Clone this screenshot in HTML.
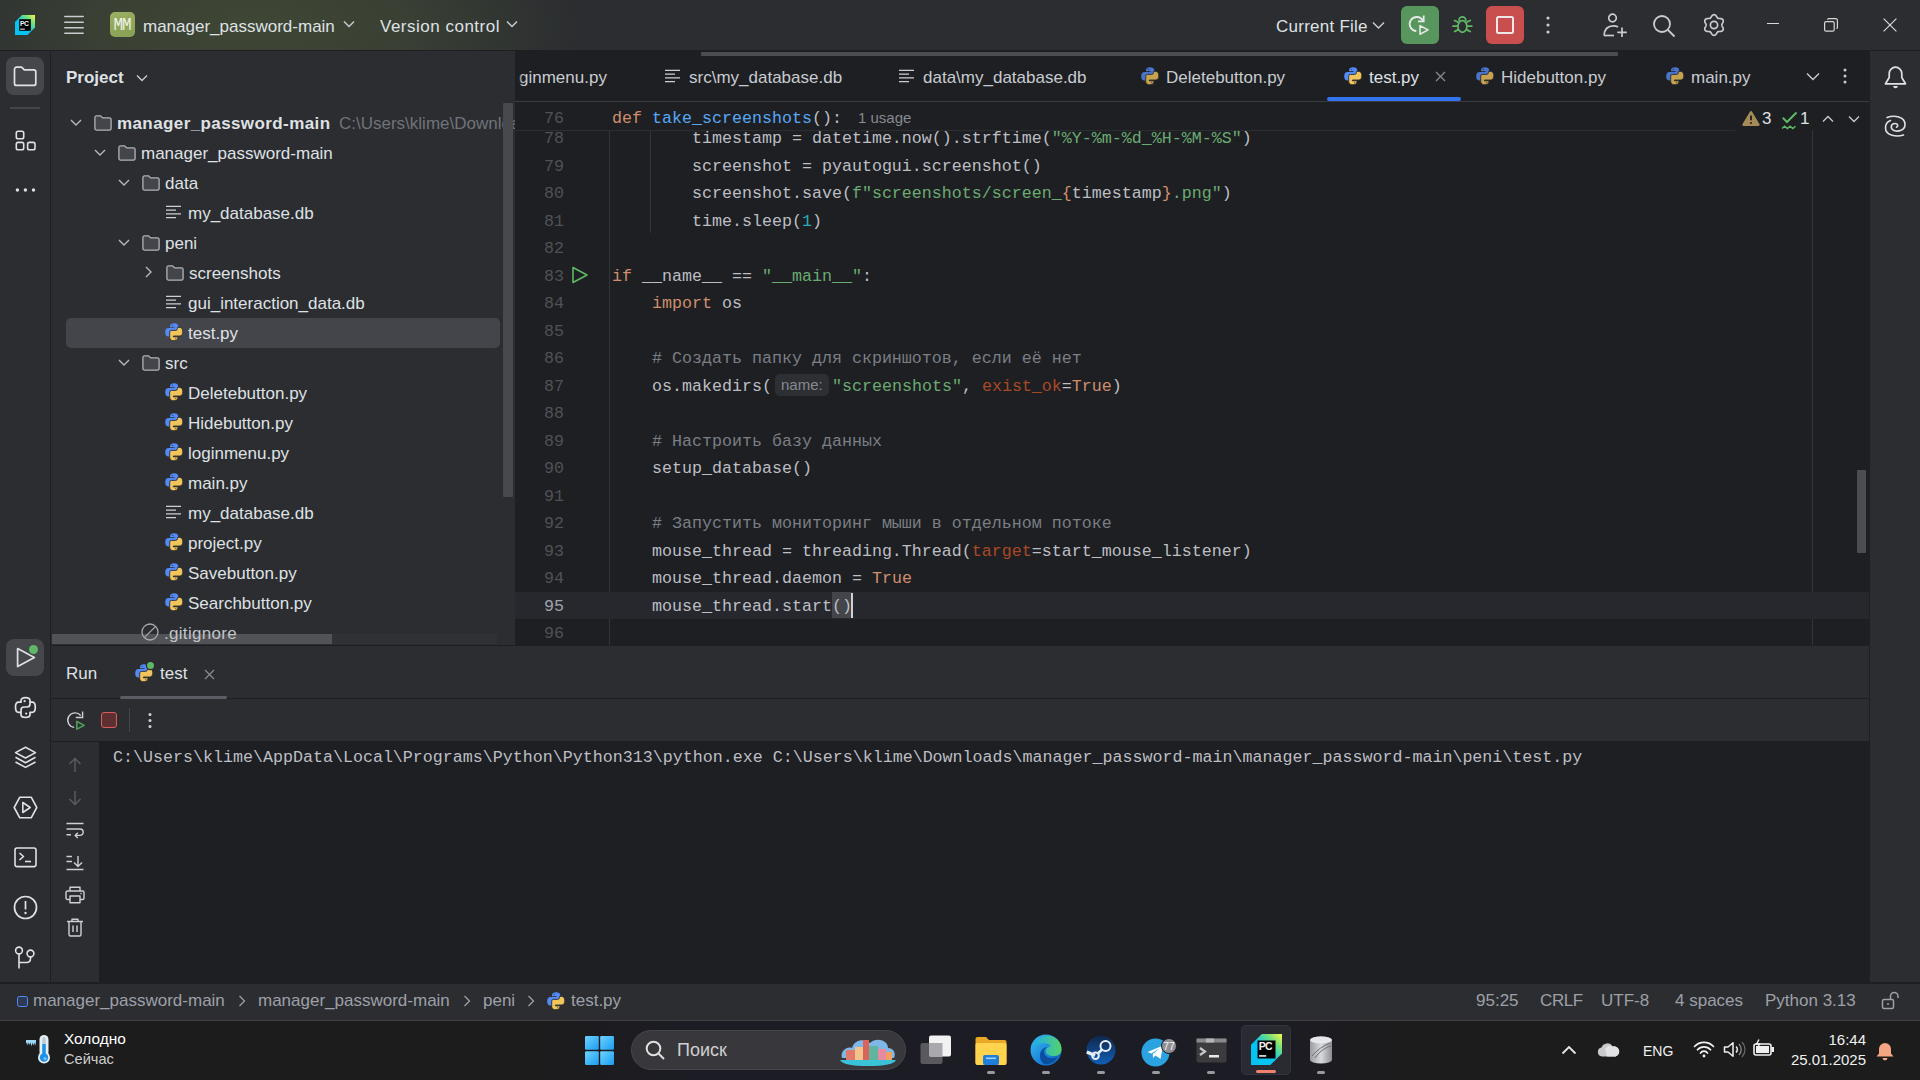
<!DOCTYPE html>
<html><head><meta charset="utf-8">
<style>
*{margin:0;padding:0;box-sizing:border-box}
html,body{width:1920px;height:1080px;overflow:hidden;background:#2b2d30;font-family:"Liberation Sans",sans-serif;color:#dfe1e5}
.a{position:absolute}
.t{position:absolute;white-space:pre;font-size:17px;line-height:20px}
.m{font-family:"Liberation Mono",monospace;font-size:16.667px;white-space:pre;position:absolute;line-height:20px}
svg{position:absolute;overflow:visible}
#title{left:0;top:0;width:1920px;height:50px;background:radial-gradient(ellipse 330px 120px at 250px 25px,#3e4634 0%,#3a4134 45%,#2b2d30 100%)}
.bd{background:#1e1f22}
</style></head><body>
<svg width="0" height="0" style="left:0;top:0"><defs>
<g id="py"><path d="M5 3.2 Q5 0.2 9 0.2 Q13.3 0.2 13.3 3.6 V8.9 Q13.3 10.6 11.5 10.6 H7.6 Q5.5 10.6 5.5 12.6 V13.6 H3.6 Q0.2 13.6 0.2 9.3 Q0.2 5 3.6 5 H9.6 V4.2 H5 Z" fill="#548af7"/>
<path d="M13 14.8 Q13 17.8 9 17.8 Q4.7 17.8 4.7 14.4 V9.1 Q4.7 7.4 6.5 7.4 H10.4 Q12.5 7.4 12.5 5.4 V4.4 H14.4 Q17.8 4.4 17.8 8.7 Q17.8 13 14.4 13 H8.4 V13.8 H13 Z" fill="#f2c55c" stroke="#2b2d30" stroke-width="0.9"/>
<circle cx="7.3" cy="2.3" r="0.6" fill="#2b3a60"/><circle cx="10.7" cy="15.7" r="0.6" fill="#6a5520"/></g>
</defs></svg>
<!-- title bar -->
<div id="title" class="a"></div>
<div class="a bd" style="left:0;top:50px;width:1920px;height:1px"></div>
<!-- title content -->
<svg style="left:15px;top:15px" width="20" height="20" viewBox="0 0 20 20">
<defs><linearGradient id="pcg" x1="0" y1="1" x2="1" y2="0"><stop offset="0" stop-color="#07c3f2"/><stop offset="0.45" stop-color="#07c3f2"/><stop offset="0.75" stop-color="#75e07a"/><stop offset="1" stop-color="#fcf84a"/></linearGradient></defs>
<path d="M7 0 H20 V12.5 L12.5 20 H0 V7 Z" fill="url(#pcg)"/>
<rect x="4.2" y="4.2" width="11.6" height="11.6" fill="#000"/>
<text x="5" y="10.6" font-family="Liberation Sans" font-size="6.8" fill="#f2f2f2" font-weight="bold" letter-spacing="-0.5">PC</text>
<rect x="5.2" y="13.6" width="4.6" height="1.1" fill="#e0e0e0"/>
</svg>
<svg style="left:64px;top:15px" width="20" height="20" viewBox="0 0 20 20">
<g stroke="#c9cbcf" stroke-width="1.6" stroke-linecap="round"><path d="M0.8 1.5H19.2M0.8 7.2H19.2M0.8 12.7H19.2M0.8 18.3H19.2"/></g>
</svg>
<div class="a" style="left:110px;top:12px;width:25px;height:25px;border-radius:5px;background:linear-gradient(160deg,#9bb063,#86a055)"></div>
<div class="a" style="left:110px;top:13.5px;width:25px;height:25px;font-family:'Liberation Mono';font-size:16px;line-height:25px;text-align:center;color:#eef2e2;letter-spacing:-1.2px;text-indent:-1px;transform:scaleY(1.1)">MM</div>
<div class="t" style="left:143px;top:17px">manager_password-main</div>
<svg style="left:343px;top:20px" width="12" height="8" viewBox="0 0 12 8"><path d="M1 1.5L6 6.5L11 1.5" fill="none" stroke="#c9cbcf" stroke-width="1.5"/></svg>
<div class="t" style="left:380px;top:17px;letter-spacing:0.5px">Version control</div>
<svg style="left:506px;top:20px" width="12" height="8" viewBox="0 0 12 8"><path d="M1 1.5L6 6.5L11 1.5" fill="none" stroke="#c9cbcf" stroke-width="1.5"/></svg>
<div class="t" style="left:1276px;top:17px;letter-spacing:0.25px">Current File</div>
<svg style="left:1372px;top:21px" width="13" height="9" viewBox="0 0 13 9"><path d="M1 1.5L6.5 7L12 1.5" fill="none" stroke="#c9cbcf" stroke-width="1.5"/></svg>
<div class="a" style="left:1401px;top:6px;width:38px;height:38px;border-radius:6px;background:#57965c"></div>
<svg style="left:1409px;top:14px" width="22" height="22" viewBox="0 0 22 22"><path d="M7.3 17 A7 7 0 1 1 13.8 6.6" fill="none" stroke="#e6e9e6" stroke-width="1.8"/><path d="M9 7.3 H14.7 V1.4" fill="none" stroke="#e6e9e6" stroke-width="1.8"/><path d="M11 11.7 V20.3 L19.1 15.9 Z" fill="none" stroke="#e6e9e6" stroke-width="1.6" stroke-linejoin="round"/></svg>
<svg style="left:1450px;top:14px" width="25" height="20" viewBox="0 0 25 20"><g fill="none" stroke="#5fb865" stroke-width="1.7" stroke-linecap="round"><path d="M9 6.3 A3.4 3.4 0 0 1 15.8 6.3"/><ellipse cx="12.4" cy="12.5" rx="4.5" ry="5.8"/><path d="M4.5 6.5 Q6.5 7.2 8 8.2M3 12.2H7.8M4.5 17.5 Q6.5 16.8 8 15.8M20.3 6.5 Q18.3 7.2 16.8 8.2M21.8 12.2H17M20.3 17.5 Q18.3 16.8 16.8 15.8"/></g></svg>
<div class="a" style="left:1486px;top:6px;width:38px;height:38px;border-radius:6px;background:#c94f4f"></div>
<div class="a" style="left:1496px;top:16px;width:18px;height:18px;border-radius:2.5px;border:2px solid #f0e8e8"></div>
<svg style="left:1545px;top:15px" width="6" height="20" viewBox="0 0 6 20"><g fill="#c9cbcf"><circle cx="3" cy="3" r="1.6"/><circle cx="3" cy="10" r="1.6"/><circle cx="3" cy="17" r="1.6"/></g></svg>
<svg style="left:1603px;top:13px" width="25" height="25" viewBox="0 0 25 25"><g fill="none" stroke="#c9cbcf" stroke-width="1.7"><circle cx="9.5" cy="5" r="3.8"/><path d="M1 22.5 C1.5 15 6 12.8 10.5 12.8 C12.5 12.8 14 13.3 15 14"/><path d="M1 22.5H11"/><path d="M19 14.5V24M14.3 19.3H23.8"/></g></svg>
<svg style="left:1653px;top:15px" width="23" height="23" viewBox="0 0 23 23"><g fill="none" stroke="#c9cbcf" stroke-width="1.8"><circle cx="9" cy="9" r="8"/><path d="M15 15L21.5 21.5"/></g></svg>
<svg style="left:1701.7px;top:13px" width="24" height="24" viewBox="0 0 24 24"><g fill="none" stroke="#c9cbcf" stroke-width="1.7" stroke-linejoin="round"><path d="M19.85 12.00 L19.90 12.41 L20.04 12.85 L20.26 13.31 L20.52 13.81 L20.79 14.36 L21.02 14.93 L21.18 15.52 L21.24 16.11 L21.17 16.67 L20.96 17.17 L20.63 17.60 L20.18 17.94 L19.64 18.19 L19.05 18.35 L18.43 18.43 L17.83 18.48 L17.26 18.50 L16.75 18.54 L16.31 18.63 L15.93 18.80 L15.59 19.05 L15.29 19.39 L15.00 19.81 L14.69 20.29 L14.36 20.79 L13.97 21.28 L13.54 21.71 L13.06 22.06 L12.54 22.27 L12.00 22.35 L11.46 22.27 L10.94 22.06 L10.46 21.71 L10.03 21.28 L9.64 20.79 L9.31 20.29 L9.00 19.81 L8.71 19.39 L8.41 19.05 L8.08 18.80 L7.69 18.63 L7.25 18.54 L6.74 18.50 L6.17 18.48 L5.57 18.43 L4.95 18.35 L4.36 18.19 L3.82 17.94 L3.37 17.60 L3.04 17.17 L2.83 16.67 L2.76 16.11 L2.82 15.52 L2.98 14.93 L3.21 14.36 L3.48 13.81 L3.74 13.31 L3.96 12.85 L4.10 12.41 L4.15 12.00 L4.10 11.59 L3.96 11.15 L3.74 10.69 L3.48 10.19 L3.21 9.64 L2.98 9.07 L2.82 8.48 L2.76 7.89 L2.83 7.33 L3.04 6.83 L3.37 6.40 L3.82 6.06 L4.36 5.81 L4.95 5.65 L5.57 5.57 L6.17 5.52 L6.74 5.50 L7.25 5.46 L7.69 5.37 L8.07 5.20 L8.41 4.95 L8.71 4.61 L9.00 4.19 L9.31 3.71 L9.64 3.21 L10.03 2.72 L10.46 2.29 L10.94 1.94 L11.46 1.73 L12.00 1.65 L12.54 1.73 L13.06 1.94 L13.54 2.29 L13.97 2.72 L14.36 3.21 L14.69 3.71 L15.00 4.19 L15.29 4.61 L15.59 4.95 L15.93 5.20 L16.31 5.37 L16.75 5.46 L17.26 5.50 L17.83 5.52 L18.43 5.57 L19.05 5.65 L19.64 5.81 L20.18 6.06 L20.63 6.40 L20.96 6.83 L21.17 7.33 L21.24 7.89 L21.18 8.48 L21.02 9.07 L20.79 9.64 L20.52 10.19 L20.26 10.69 L20.04 11.15 L19.90 11.59 Z"/><circle cx="12" cy="12" r="3.6"/></g></svg>
<div class="a" style="left:1767px;top:23px;width:12px;height:1.3px;background:#d8d8d8"></div>
<svg style="left:1824px;top:18px" width="14" height="14" viewBox="0 0 14 14"><g fill="none" stroke="#d8d8d8" stroke-width="1.2"><rect x="0.6" y="3.6" width="9.6" height="9.6" rx="1.5"/><path d="M3.6 1.8 V1.6 A1 1 0 0 1 4.6 0.6 H11.6 A1.8 1.8 0 0 1 13.4 2.4 V9.4 A1 1 0 0 1 12.4 10.4"/></g></svg>
<svg style="left:1883px;top:18px" width="14" height="14" viewBox="0 0 14 14"><path d="M0.6 0.6L13.4 13.4M13.4 0.6L0.6 13.4" stroke="#d8d8d8" stroke-width="1.2"/></svg>

<!-- left strip -->
<div class="a bd" style="left:50px;top:51px;width:1px;height:932px"></div>

<!-- left strip icons -->
<div class="a" style="left:6px;top:57px;width:38px;height:38px;border-radius:8px;background:#45474b"></div>
<svg style="left:13px;top:66px" width="25" height="21" viewBox="0 0 25 21"><path d="M1.5 3.2 A2 2 0 0 1 3.5 1.2 H8.6 L11.3 3.9 H20.8 A2 2 0 0 1 22.8 5.9 V17.4 A2 2 0 0 1 20.8 19.4 H3.5 A2 2 0 0 1 1.5 17.4 Z" fill="none" stroke="#dfe1e5" stroke-width="1.7" stroke-linejoin="round"/></svg>
<div class="a" style="left:10px;top:107px;width:30px;height:2px;background:#43454a"></div>
<svg style="left:14px;top:129px" width="23" height="23" viewBox="0 0 23 23"><g fill="none" stroke="#dfe1e5" stroke-width="1.6"><rect x="2.3" y="2.3" width="7.4" height="7.4" rx="1.8"/><rect x="2.3" y="13.4" width="7.4" height="7.4" rx="1.8"/><rect x="13.6" y="13.4" width="7.4" height="7.4" rx="1.8"/></g></svg>
<svg style="left:14px;top:186px" width="23" height="8" viewBox="0 0 23 8"><g fill="#dfe1e5"><circle cx="3.4" cy="4" r="1.7"/><circle cx="11.4" cy="4" r="1.7"/><circle cx="19.5" cy="4" r="1.7"/></g></svg>
<div class="a" style="left:6px;top:639px;width:38px;height:37px;border-radius:8px;background:#45474b"></div>
<svg style="left:15px;top:646px" width="24" height="24" viewBox="0 0 24 24"><path d="M2.6 2.6 V20.6 L19.4 11.6 Z" fill="none" stroke="#dfe1e5" stroke-width="1.7" stroke-linejoin="round"/></svg>
<div class="a" style="left:28.5px;top:645px;width:9px;height:9px;border-radius:50%;background:#5fb865;box-shadow:0 0 0 1.3px #45474b"></div>
<svg style="left:14px;top:696px" width="23" height="23" viewBox="0 0 23 23"><g fill="none" stroke="#dfe1e5" stroke-width="1.7" stroke-linejoin="round"><path d="M7 6.2 V4.6 Q7 1.6 11.6 1.6 Q16 1.6 16 4.6 V6.2 H18.2 Q21.3 6.2 21.3 11.2 Q21.3 16.3 18.2 16.3 H16 V18.4 Q16 21.4 11.6 21.4 Q7 21.4 7 18.4 V16.3 H4.6 Q1.5 16.3 1.5 11.2 Q1.5 6.2 4.6 6.2 Z"/><path d="M7 16.3 V14.2 Q7 11 10 11 H13 Q16 11 16 8 V6.2"/></g><circle cx="10.6" cy="5.2" r="1.1" fill="#dfe1e5"/><circle cx="12.2" cy="17.6" r="1.1" fill="#dfe1e5"/></svg>
<svg style="left:14px;top:746px" width="23" height="23" viewBox="0 0 23 23"><g fill="none" stroke="#dfe1e5" stroke-width="1.6" stroke-linejoin="round"><path d="M11.5 1.2 L21.5 6.6 L11.5 12 L1.5 6.6 Z"/><path d="M1.5 11.3 L11.5 16.7 L21.5 11.3"/><path d="M1.5 16 L11.5 21.4 L21.5 16"/></g></svg>
<svg style="left:13px;top:796px" width="25" height="23" viewBox="0 0 25 23"><g fill="none" stroke="#dfe1e5" stroke-width="1.6" stroke-linejoin="round"><path d="M6.8 1.2 H18.2 L23.8 11.5 L18.2 21.8 H6.8 L1.2 11.5 Z"/><path d="M9.8 6.5 V16.5 L17.2 11.5 Z"/></g></svg>
<svg style="left:14px;top:847px" width="23" height="21" viewBox="0 0 23 21"><g fill="none" stroke="#dfe1e5" stroke-width="1.6" stroke-linejoin="round"><rect x="1" y="1" width="21" height="18.6" rx="2"/><path d="M5.5 6 L9.5 9.5 L5.5 13"/><path d="M11 14.5 H17"/></g></svg>
<svg style="left:13px;top:895px" width="25" height="25" viewBox="0 0 25 25"><g fill="none" stroke="#dfe1e5" stroke-width="1.7"><circle cx="12.5" cy="12.5" r="11"/><path d="M12.5 6 V14.5"/></g><circle cx="12.5" cy="18" r="1.2" fill="#dfe1e5"/></svg>
<svg style="left:14px;top:946px" width="22" height="23" viewBox="0 0 22 23"><g fill="none" stroke="#dfe1e5" stroke-width="1.6"><circle cx="5" cy="4.5" r="3.4"/><circle cx="16.5" cy="7.5" r="3.4"/><path d="M5 8 V22.5 M5 16.5 H12.5 Q16.5 16.5 16.5 12.5 V11"/></g></svg>
<!-- right strip border -->
<div class="a bd" style="left:1869px;top:51px;width:1px;height:932px"></div>
<!-- editor -->
<div id="editor" class="a" style="left:515px;top:51px;width:1354px;height:594px;background:#1e1f22"></div>


<!-- editor content -->
<div class="a" style="left:515px;top:51px;width:1354px;height:594px;overflow:hidden">
<div class="a" style="left:-515px;top:-51px;width:1920px;height:1080px">
<div class="a" style="left:701px;top:51.5px;width:917px;height:4px;background:#4b4d51;border-radius:1px"></div>
<div class="t" style="left:519px;top:67.5px;color:#c8cbd0">ginmenu.py</div>
<div class="a" style="left:515px;top:60px;width:8px;height:36px;background:linear-gradient(90deg,#1e1f22,rgba(30,31,34,0))"></div>
<svg style="left:664px;top:69px" width="18" height="14" viewBox="0 0 18 14"><g stroke="#ced0d6" stroke-width="1.3"><path d="M1 1.4H16M1 5.1H11M1 8.8H16M1 12.6H11"/></g></svg>
<div class="t" style="left:689px;top:67.5px;color:#c8cbd0">src\my_database.db</div>
<svg style="left:898px;top:69px" width="18" height="14" viewBox="0 0 18 14"><g stroke="#ced0d6" stroke-width="1.3"><path d="M1 1.4H16M1 5.1H11M1 8.8H16M1 12.6H11"/></g></svg>
<div class="t" style="left:923px;top:67.5px;color:#c8cbd0">data\my_database.db</div>
<svg style="left:1141px;top:67px;opacity:0.8" width="18" height="18" viewBox="0 0 18 18"><use href="#py"/></svg>
<div class="t" style="left:1166px;top:67.5px;color:#c8cbd0">Deletebutton.py</div>
<svg style="left:1344px;top:67px" width="18" height="18" viewBox="0 0 18 18"><use href="#py"/></svg>
<div class="t" style="left:1369px;top:67.5px">test.py</div>
<svg style="left:1435px;top:71px" width="11" height="11" viewBox="0 0 11 11"><path d="M1 1L10 10M10 1L1 10" stroke="#868a91" stroke-width="1.3"/></svg>
<svg style="left:1476px;top:67px;opacity:0.8" width="18" height="18" viewBox="0 0 18 18"><use href="#py"/></svg>
<div class="t" style="left:1501px;top:67.5px;color:#c8cbd0">Hidebutton.py</div>
<svg style="left:1666px;top:67px;opacity:0.8" width="18" height="18" viewBox="0 0 18 18"><use href="#py"/></svg>
<div class="t" style="left:1691px;top:67.5px;color:#c8cbd0">main.py</div>
<svg style="left:1806px;top:72px" width="14" height="9" viewBox="0 0 14 9"><path d="M1 1.5L7 7.5L13 1.5" fill="none" stroke="#c9cbcf" stroke-width="1.4"/></svg>
<svg style="left:1842px;top:67px" width="6" height="18" viewBox="0 0 6 18"><g fill="#c9cbcf"><circle cx="3" cy="3" r="1.5"/><circle cx="3" cy="9" r="1.5"/><circle cx="3" cy="15" r="1.5"/></g></svg>
<div class="a" style="left:515px;top:101px;width:1354px;height:1px;background:#393b40"></div>
<div class="a" style="left:1327px;top:97px;width:134px;height:4px;border-radius:2px;background:#3574f0"></div>
<!-- guides -->
<div class="a" style="left:609px;top:130px;width:1px;height:515px;background:#313438"></div>
<div class="a" style="left:650px;top:130px;width:1px;height:103px;background:#313438"></div>
<div class="a" style="left:1812px;top:130px;width:1px;height:515px;background:#313438"></div>
<div class="a" style="left:515px;top:591.5px;width:1354px;height:27px;background:#26282e"></div>
<div class="a" style="left:832px;top:592px;width:20px;height:26px;background:#43454a"></div>
<div class="m" style="left:513px;top:125.10px;width:51px;text-align:right;line-height:27.5px;color:#4e5157">78</div>
<div class="m" style="left:612px;top:125.10px;line-height:27.5px;color:#bcbec4">        timestamp = datetime.now().strftime(<span style="color:#6aab73">&quot;%Y-%m-%d_%H-%M-%S&quot;</span>)</div>
<div class="m" style="left:513px;top:152.60px;width:51px;text-align:right;line-height:27.5px;color:#4e5157">79</div>
<div class="m" style="left:612px;top:152.60px;line-height:27.5px;color:#bcbec4">        screenshot = pyautogui.screenshot()</div>
<div class="m" style="left:513px;top:180.10px;width:51px;text-align:right;line-height:27.5px;color:#4e5157">80</div>
<div class="m" style="left:612px;top:180.10px;line-height:27.5px;color:#bcbec4">        screenshot.save(<span style="color:#6aab73">f&quot;screenshots/screen_</span><span style="color:#cf8e6d">{</span>timestamp<span style="color:#cf8e6d">}</span><span style="color:#6aab73">.png&quot;</span>)</div>
<div class="m" style="left:513px;top:207.60px;width:51px;text-align:right;line-height:27.5px;color:#4e5157">81</div>
<div class="m" style="left:612px;top:207.60px;line-height:27.5px;color:#bcbec4">        time.sleep(<span style="color:#2aacb8">1</span>)</div>
<div class="m" style="left:513px;top:235.10px;width:51px;text-align:right;line-height:27.5px;color:#4e5157">82</div>
<div class="m" style="left:612px;top:235.10px;line-height:27.5px;color:#bcbec4"></div>
<div class="m" style="left:513px;top:262.60px;width:51px;text-align:right;line-height:27.5px;color:#4e5157">83</div>
<div class="m" style="left:612px;top:262.60px;line-height:27.5px;color:#bcbec4"><span style="color:#cf8e6d">if</span> __name__ == <span style="color:#6aab73">&quot;__main__&quot;</span>:</div>
<div class="m" style="left:513px;top:290.10px;width:51px;text-align:right;line-height:27.5px;color:#4e5157">84</div>
<div class="m" style="left:612px;top:290.10px;line-height:27.5px;color:#bcbec4">    <span style="color:#cf8e6d">import</span> os</div>
<div class="m" style="left:513px;top:317.60px;width:51px;text-align:right;line-height:27.5px;color:#4e5157">85</div>
<div class="m" style="left:612px;top:317.60px;line-height:27.5px;color:#bcbec4"></div>
<div class="m" style="left:513px;top:345.10px;width:51px;text-align:right;line-height:27.5px;color:#4e5157">86</div>
<div class="m" style="left:612px;top:345.10px;line-height:27.5px;color:#bcbec4"><span style="color:#7a7e85">    # Создать папку для скриншотов, если её нет</span></div>
<div class="m" style="left:513px;top:372.60px;width:51px;text-align:right;line-height:27.5px;color:#4e5157">87</div>
<div class="m" style="left:612px;top:372.60px;line-height:27.5px;color:#bcbec4">    os.makedirs(<span style="display:inline-block;width:60px"></span><span style="color:#6aab73">&quot;screenshots&quot;</span>, <span style="color:#aa4926">exist_ok</span>=<span style="color:#cf8e6d">True</span>)</div>
<div class="m" style="left:513px;top:400.10px;width:51px;text-align:right;line-height:27.5px;color:#4e5157">88</div>
<div class="m" style="left:612px;top:400.10px;line-height:27.5px;color:#bcbec4"></div>
<div class="m" style="left:513px;top:427.60px;width:51px;text-align:right;line-height:27.5px;color:#4e5157">89</div>
<div class="m" style="left:612px;top:427.60px;line-height:27.5px;color:#bcbec4"><span style="color:#7a7e85">    # Настроить базу данных</span></div>
<div class="m" style="left:513px;top:455.10px;width:51px;text-align:right;line-height:27.5px;color:#4e5157">90</div>
<div class="m" style="left:612px;top:455.10px;line-height:27.5px;color:#bcbec4">    setup_database()</div>
<div class="m" style="left:513px;top:482.60px;width:51px;text-align:right;line-height:27.5px;color:#4e5157">91</div>
<div class="m" style="left:612px;top:482.60px;line-height:27.5px;color:#bcbec4"></div>
<div class="m" style="left:513px;top:510.10px;width:51px;text-align:right;line-height:27.5px;color:#4e5157">92</div>
<div class="m" style="left:612px;top:510.10px;line-height:27.5px;color:#bcbec4"><span style="color:#7a7e85">    # Запустить мониторинг мыши в отдельном потоке</span></div>
<div class="m" style="left:513px;top:537.60px;width:51px;text-align:right;line-height:27.5px;color:#4e5157">93</div>
<div class="m" style="left:612px;top:537.60px;line-height:27.5px;color:#bcbec4">    mouse_thread = threading.Thread(<span style="color:#aa4926">target</span>=start_mouse_listener)</div>
<div class="m" style="left:513px;top:565.10px;width:51px;text-align:right;line-height:27.5px;color:#4e5157">94</div>
<div class="m" style="left:612px;top:565.10px;line-height:27.5px;color:#bcbec4">    mouse_thread.daemon = <span style="color:#cf8e6d">True</span></div>
<div class="m" style="left:513px;top:592.60px;width:51px;text-align:right;line-height:27.5px;color:#a1a3ab">95</div>
<div class="m" style="left:612px;top:592.60px;line-height:27.5px;color:#bcbec4">    mouse_thread.start()</div>
<div class="m" style="left:513px;top:620.10px;width:51px;text-align:right;line-height:27.5px;color:#4e5157">96</div>
<div class="m" style="left:612px;top:620.10px;line-height:27.5px;color:#bcbec4"></div>
<!-- hint -->
<div class="a" style="left:775px;top:374px;width:54px;height:22px;border-radius:5px;background:#2d2f33"></div>
<div class="t" style="left:781px;top:375px;font-size:15px;line-height:20px;color:#868a91">name:</div>
<!-- caret -->
<div class="a" style="left:851px;top:593px;width:2px;height:25px;background:#ced0d6"></div>
<!-- run gutter icon -->
<svg style="left:571px;top:266px" width="18" height="18" viewBox="0 0 18 18"><path d="M2 1.5 V16.5 L16 9 Z" fill="none" stroke="#5fb865" stroke-width="1.6" stroke-linejoin="round"/></svg>
<!-- sticky header -->
<div class="a" style="left:515px;top:102px;width:1354px;height:28px;background:#1e1f22"></div>
<div class="a" style="left:515px;top:130px;width:1220px;height:1px;background:#2b2d30"></div>
<div class="m" style="left:513px;top:104.7px;width:51px;text-align:right;line-height:27.5px;color:#4e5157">76</div>
<div class="m" style="left:612px;top:104.7px;line-height:27.5px;color:#bcbec4"><span style="color:#cf8e6d">def</span> <span style="color:#56a8f5">take_screenshots</span>():</div>
<div class="t" style="left:858px;top:107.5px;font-size:15px;color:#868a91">1 usage</div>
<!-- warnings widget -->
<svg style="left:1742px;top:110px" width="18" height="17" viewBox="0 0 18 17"><path d="M9 2.3 L16.3 14.7 H1.7 Z" fill="#a48b57" stroke="#a48b57" stroke-width="2.6" stroke-linejoin="round"/><path d="M9 5.5V10.3" stroke="#1e1f22" stroke-width="1.8"/><circle cx="9" cy="12.9" r="1" fill="#1e1f22"/></svg>
<div class="t" style="left:1762px;top:109px;font-size:17px;color:#dfe1e5">3</div>
<svg style="left:1781px;top:111px" width="18" height="19" viewBox="0 0 18 19"><path d="M1.8 6.8 L6 11 L15.5 1.5" fill="none" stroke="#5fb865" stroke-width="2"/><path d="M1 17.5 L3.7 15.2 L6.4 17.5 L9.1 15.2 L11.8 17.5 L14.5 15.2" fill="none" stroke="#5fb865" stroke-width="1.4"/></svg>
<div class="t" style="left:1800px;top:109px;font-size:17px;color:#dfe1e5">1</div>
<svg style="left:1822px;top:115px" width="12" height="8" viewBox="0 0 12 8"><path d="M1 6.5L6 1.5L11 6.5" fill="none" stroke="#c9cbcf" stroke-width="1.3"/></svg>
<svg style="left:1848px;top:115px" width="12" height="8" viewBox="0 0 12 8"><path d="M1 1.5L6 6.5L11 1.5" fill="none" stroke="#c9cbcf" stroke-width="1.3"/></svg>
<!-- scrollbar -->
<div class="a" style="left:1857px;top:470px;width:9px;height:83px;background:#4b4d51;border-radius:1px"></div>
</div></div>

<!-- project panel -->
<div class="a" style="left:51px;top:51px;width:464px;height:594px;overflow:hidden">
<div class="a" style="left:-51px;top:-51px;width:1920px;height:1080px">
<div class="t" style="left:66px;top:67.5px;font-weight:bold;color:#dfe1e5">Project</div>
<svg style="left:136px;top:74px" width="12" height="8" viewBox="0 0 12 8"><path d="M1 1.5L6 6.5L11 1.5" fill="none" stroke="#c9cbcf" stroke-width="1.4"/></svg>
<div class="a" style="left:52px;top:634px;width:445px;height:10px;background:rgba(255,255,255,0.02)"></div>
<div class="a" style="left:52px;top:634px;width:280px;height:10px;background:rgba(255,255,255,0.17)"></div>
<div class="a" style="left:66px;top:318px;width:434px;height:30px;border-radius:5px;background:#43454a"></div>
<svg style="left:70px;top:119px" width="12" height="8" viewBox="0 0 12 8"><path d="M1 1L6 6L11 1" fill="none" stroke="#b4b8bf" stroke-width="1.4"/></svg>
<svg style="left:94px;top:115px" width="18" height="16" viewBox="0 0 18 16"><path d="M0.9 2.6 A1.7 1.7 0 0 1 2.6 0.9 H6.6 L8.6 2.9 H15.4 A1.7 1.7 0 0 1 17.1 4.6 V13.4 A1.7 1.7 0 0 1 15.4 15.1 H2.6 A1.7 1.7 0 0 1 0.9 13.4 Z" fill="#43454a" stroke="#b0b3b8" stroke-width="1.3"/></svg>
<div class="t" style="left:117px;top:114.2px;font-weight:bold;letter-spacing:0.4px">manager_password-main</div>
<div class="t" style="left:339px;top:114.2px;color:#6f737a;width:176px;overflow:hidden">C:\Users\klime\Downloads\manager_password-main</div>
<svg style="left:94px;top:149px" width="12" height="8" viewBox="0 0 12 8"><path d="M1 1L6 6L11 1" fill="none" stroke="#b4b8bf" stroke-width="1.4"/></svg>
<svg style="left:118px;top:145px" width="18" height="16" viewBox="0 0 18 16"><path d="M0.9 2.6 A1.7 1.7 0 0 1 2.6 0.9 H6.6 L8.6 2.9 H15.4 A1.7 1.7 0 0 1 17.1 4.6 V13.4 A1.7 1.7 0 0 1 15.4 15.1 H2.6 A1.7 1.7 0 0 1 0.9 13.4 Z" fill="#43454a" stroke="#b0b3b8" stroke-width="1.3"/></svg>
<div class="t" style="left:141px;top:144.2px">manager_password-main</div>
<svg style="left:118px;top:179px" width="12" height="8" viewBox="0 0 12 8"><path d="M1 1L6 6L11 1" fill="none" stroke="#b4b8bf" stroke-width="1.4"/></svg>
<svg style="left:142px;top:175px" width="18" height="16" viewBox="0 0 18 16"><path d="M0.9 2.6 A1.7 1.7 0 0 1 2.6 0.9 H6.6 L8.6 2.9 H15.4 A1.7 1.7 0 0 1 17.1 4.6 V13.4 A1.7 1.7 0 0 1 15.4 15.1 H2.6 A1.7 1.7 0 0 1 0.9 13.4 Z" fill="#43454a" stroke="#b0b3b8" stroke-width="1.3"/></svg>
<div class="t" style="left:165px;top:174.2px">data</div>
<svg style="left:165px;top:205px" width="18" height="14" viewBox="0 0 18 14"><g stroke="#ced0d6" stroke-width="1.3"><path d="M1 1.4H16M1 5.1H11M1 8.8H16M1 12.6H11"/></g></svg>
<div class="t" style="left:188px;top:204.2px">my_database.db</div>
<svg style="left:118px;top:239px" width="12" height="8" viewBox="0 0 12 8"><path d="M1 1L6 6L11 1" fill="none" stroke="#b4b8bf" stroke-width="1.4"/></svg>
<svg style="left:142px;top:235px" width="18" height="16" viewBox="0 0 18 16"><path d="M0.9 2.6 A1.7 1.7 0 0 1 2.6 0.9 H6.6 L8.6 2.9 H15.4 A1.7 1.7 0 0 1 17.1 4.6 V13.4 A1.7 1.7 0 0 1 15.4 15.1 H2.6 A1.7 1.7 0 0 1 0.9 13.4 Z" fill="#43454a" stroke="#b0b3b8" stroke-width="1.3"/></svg>
<div class="t" style="left:165px;top:234.2px">peni</div>
<svg style="left:145px;top:266px" width="8" height="12" viewBox="0 0 8 12"><path d="M1 1L6 6L1 11" fill="none" stroke="#b4b8bf" stroke-width="1.4"/></svg>
<svg style="left:166px;top:265px" width="18" height="16" viewBox="0 0 18 16"><path d="M0.9 2.6 A1.7 1.7 0 0 1 2.6 0.9 H6.6 L8.6 2.9 H15.4 A1.7 1.7 0 0 1 17.1 4.6 V13.4 A1.7 1.7 0 0 1 15.4 15.1 H2.6 A1.7 1.7 0 0 1 0.9 13.4 Z" fill="#43454a" stroke="#b0b3b8" stroke-width="1.3"/></svg>
<div class="t" style="left:189px;top:264.2px">screenshots</div>
<svg style="left:165px;top:295px" width="18" height="14" viewBox="0 0 18 14"><g stroke="#ced0d6" stroke-width="1.3"><path d="M1 1.4H16M1 5.1H11M1 8.8H16M1 12.6H11"/></g></svg>
<div class="t" style="left:188px;top:294.2px">gui_interaction_data.db</div>
<svg style="left:165px;top:323px" width="18" height="18" viewBox="0 0 18 18"><use href="#py"/></svg>
<div class="t" style="left:188px;top:324.2px">test.py</div>
<svg style="left:118px;top:359px" width="12" height="8" viewBox="0 0 12 8"><path d="M1 1L6 6L11 1" fill="none" stroke="#b4b8bf" stroke-width="1.4"/></svg>
<svg style="left:142px;top:355px" width="18" height="16" viewBox="0 0 18 16"><path d="M0.9 2.6 A1.7 1.7 0 0 1 2.6 0.9 H6.6 L8.6 2.9 H15.4 A1.7 1.7 0 0 1 17.1 4.6 V13.4 A1.7 1.7 0 0 1 15.4 15.1 H2.6 A1.7 1.7 0 0 1 0.9 13.4 Z" fill="#43454a" stroke="#b0b3b8" stroke-width="1.3"/></svg>
<div class="t" style="left:165px;top:354.2px">src</div>
<svg style="left:165px;top:383px" width="18" height="18" viewBox="0 0 18 18"><use href="#py"/></svg>
<div class="t" style="left:188px;top:384.2px">Deletebutton.py</div>
<svg style="left:165px;top:413px" width="18" height="18" viewBox="0 0 18 18"><use href="#py"/></svg>
<div class="t" style="left:188px;top:414.2px">Hidebutton.py</div>
<svg style="left:165px;top:443px" width="18" height="18" viewBox="0 0 18 18"><use href="#py"/></svg>
<div class="t" style="left:188px;top:444.2px">loginmenu.py</div>
<svg style="left:165px;top:473px" width="18" height="18" viewBox="0 0 18 18"><use href="#py"/></svg>
<div class="t" style="left:188px;top:474.2px">main.py</div>
<svg style="left:165px;top:505px" width="18" height="14" viewBox="0 0 18 14"><g stroke="#ced0d6" stroke-width="1.3"><path d="M1 1.4H16M1 5.1H11M1 8.8H16M1 12.6H11"/></g></svg>
<div class="t" style="left:188px;top:504.20000000000005px">my_database.db</div>
<svg style="left:165px;top:533px" width="18" height="18" viewBox="0 0 18 18"><use href="#py"/></svg>
<div class="t" style="left:188px;top:534.2px">project.py</div>
<svg style="left:165px;top:563px" width="18" height="18" viewBox="0 0 18 18"><use href="#py"/></svg>
<div class="t" style="left:188px;top:564.2px">Savebutton.py</div>
<svg style="left:165px;top:593px" width="18" height="18" viewBox="0 0 18 18"><use href="#py"/></svg>
<div class="t" style="left:188px;top:594.2px">Searchbutton.py</div>
<svg style="left:141px;top:623px" width="18" height="18" viewBox="0 0 18 18"><g fill="none" stroke="#a8abb0" stroke-width="1.3"><circle cx="9" cy="9" r="8"/><path d="M3.6 14.4L14.4 3.6"/></g></svg>
<div class="t" style="left:164px;top:624.2px;color:#c2c5ca;letter-spacing:0.3px">.gitignore</div>
<div class="a" style="left:503px;top:103px;width:10px;height:394px;background:#47494d;border-radius:1px"></div>
</div></div>
<!-- horizontal divider -->
<div class="a bd" style="left:51px;top:645px;width:1818px;height:1px"></div>
<!-- run panel -->
<div id="run" class="a" style="left:51px;top:646px;width:1818px;height:336px;background:#2b2d30"></div>
<div class="a bd" style="left:0;top:982px;width:1920px;height:2px"></div>
<!-- status bar -->
<div id="status" class="a" style="left:0;top:984px;width:1920px;height:36px;background:#2b2d30"></div>

<!-- right strip icons -->
<svg style="left:1884px;top:64px" width="23" height="25" viewBox="0 0 23 25"><g fill="none" stroke="#dfe1e5" stroke-width="1.7" stroke-linejoin="round"><path d="M5.2 9.5 A6.3 6.3 0 0 1 17.8 9.5 V13.5 L21.5 19.8 H1.5 L5.2 13.5 Z"/></g><path d="M9.2 22 H13.8 A2.3 2.3 0 0 1 9.2 22 Z" fill="#dfe1e5"/></svg>
<svg style="left:1884px;top:115px" width="23" height="23" viewBox="0 0 23 23"><path d="M3 2.5 C10 0 21 1.5 21 9.5 C21 15.5 14 17 10 15.5 C6 14 6.5 8.5 11 8.5 C14 8.5 14.5 11.5 12.5 12.2 M19.5 20 C13 22 1.5 21 1.5 13 C1.5 9.5 3.5 6.5 6.5 5.5" fill="none" stroke="#dfe1e5" stroke-width="1.6" stroke-linecap="round"/></svg>

<!-- run panel content -->
<div class="t" style="left:66px;top:664px">Run</div>
<svg style="left:135px;top:664px" width="18" height="18" viewBox="0 0 18 18"><use href="#py"/></svg>
<div class="a" style="left:146.5px;top:661.5px;width:7.5px;height:7.5px;border-radius:50%;background:#5fb865;box-shadow:0 0 0 1.3px #2b2d30"></div>
<div class="t" style="left:160px;top:664px">test</div>
<svg style="left:204px;top:669px" width="11" height="11" viewBox="0 0 11 11"><path d="M1 1L10 10M10 1L1 10" stroke="#868a91" stroke-width="1.3"/></svg>
<div class="a" style="left:51px;top:698px;width:1818px;height:1px;background:#1e1f22"></div>
<div class="a" style="left:120px;top:695.5px;width:107px;height:3px;border-radius:1.5px;background:#5a5d63"></div>
<svg style="left:65px;top:709px" width="22" height="22" viewBox="0 0 22 22"><path d="M9.2 18.4 A7.3 7.3 0 1 1 15.7 6.5" fill="none" stroke="#ced0d6" stroke-width="1.4"/><path d="M10.8 8.5 H17.6 V2.4" fill="none" stroke="#ced0d6" stroke-width="1.4"/><path d="M11.8 12.4 V20.2 L19.2 16.3 Z" fill="#233a28" stroke="#57a05e" stroke-width="1.5" stroke-linejoin="round"/></svg>
<div class="a" style="left:101px;top:712px;width:16px;height:16px;border-radius:3px;background:#5e3032;border:1.5px solid #db5c5c"></div>
<div class="a" style="left:129px;top:708px;width:1px;height:24px;background:#43454a"></div>
<svg style="left:147px;top:712px" width="6" height="18" viewBox="0 0 6 18"><g fill="#ced0d6"><circle cx="3" cy="2.5" r="1.5"/><circle cx="3" cy="8.5" r="1.5"/><circle cx="3" cy="14.5" r="1.5"/></g></svg>
<div class="a" style="left:99px;top:741px;width:1770px;height:241px;background:#1e1f22"></div>
<div class="a" style="left:51px;top:741px;width:48px;height:241px;background:#2b2d30"></div>
<div class="a" style="left:51px;top:741px;width:48px;height:1px;background:#1e1f22"></div>
<svg style="left:67px;top:757px" width="16" height="16" viewBox="0 0 16 16"><path d="M8 15V1.5M2.5 7L8 1.5L13.5 7" fill="none" stroke="#5a5d63" stroke-width="1.4"/></svg>
<svg style="left:67px;top:790px" width="16" height="16" viewBox="0 0 16 16"><path d="M8 1V14.5M2.5 9L8 14.5L13.5 9" fill="none" stroke="#5a5d63" stroke-width="1.4"/></svg>
<svg style="left:65px;top:822px" width="20" height="18" viewBox="0 0 20 18"><g fill="none" stroke="#ced0d6" stroke-width="1.4"><path d="M1.5 1.5H18.5M1.5 7H15 A3.2 3.2 0 0 1 15 13.4 H10.5M1.5 12.8H6M12.8 10.8L10.2 13.4L12.8 16"/></g></svg>
<svg style="left:65px;top:855px" width="20" height="16" viewBox="0 0 20 16"><g fill="none" stroke="#ced0d6" stroke-width="1.4"><path d="M1.5 1.5H7M1.5 6.5H7M1.5 14.5H18.5M13 1V11.5M9 7.5L13 11.5L17 7.5"/></g></svg>
<svg style="left:65px;top:886px" width="20" height="18" viewBox="0 0 20 18"><g fill="none" stroke="#ced0d6" stroke-width="1.4" stroke-linejoin="round"><path d="M5 5V1.2H15V5"/><path d="M5 13.5H2.5A1.5 1.5 0 0 1 1 12V6.5A1.5 1.5 0 0 1 2.5 5H17.5A1.5 1.5 0 0 1 19 6.5V12A1.5 1.5 0 0 1 17.5 13.5H15"/><rect x="5" y="10" width="10" height="6.8"/></g><circle cx="16" cy="7.5" r="0.8" fill="#ced0d6"/></svg>
<svg style="left:66px;top:918px" width="18" height="19" viewBox="0 0 18 19"><g fill="none" stroke="#ced0d6" stroke-width="1.4" stroke-linejoin="round"><path d="M1 3.5H17M6 3.5V1.2H12V3.5M3 3.5V16.5A1.5 1.5 0 0 0 4.5 18H13.5A1.5 1.5 0 0 0 15 16.5V3.5M7 7.5V14M11 7.5V14"/></g></svg>
<div class="m" style="left:113px;top:748px;color:#bcbec4">C:\Users\klime\AppData\Local\Programs\Python\Python313\python.exe C:\Users\klime\Downloads\manager_password-main\manager_password-main\peni\test.py</div>

<!-- status bar content -->
<div class="a" style="left:17px;top:995.5px;width:11px;height:11px;border-radius:2.5px;border:1.5px solid #548af7;background:#2e3a55"></div>
<div class="t" style="left:33px;top:991px;color:#9da0a8">manager_password-main</div>
<svg style="left:238px;top:995px" width="8" height="12" viewBox="0 0 8 12"><path d="M1.5 1L6.5 6L1.5 11" fill="none" stroke="#9da0a8" stroke-width="1.3"/></svg>
<div class="t" style="left:258px;top:991px;color:#9da0a8">manager_password-main</div>
<svg style="left:463px;top:995px" width="8" height="12" viewBox="0 0 8 12"><path d="M1.5 1L6.5 6L1.5 11" fill="none" stroke="#9da0a8" stroke-width="1.3"/></svg>
<div class="t" style="left:483px;top:991px;color:#9da0a8">peni</div>
<svg style="left:527px;top:995px" width="8" height="12" viewBox="0 0 8 12"><path d="M1.5 1L6.5 6L1.5 11" fill="none" stroke="#9da0a8" stroke-width="1.3"/></svg>
<svg style="left:547px;top:992px" width="18" height="18" viewBox="0 0 18 18"><use href="#py"/></svg>
<div class="t" style="left:571px;top:991px;color:#9da0a8">test.py</div>
<div class="t" style="left:1476px;top:991px;color:#9da0a8">95:25</div>
<div class="t" style="left:1540px;top:991px;color:#9da0a8;letter-spacing:-0.4px">CRLF</div>
<div class="t" style="left:1601px;top:991px;color:#9da0a8">UTF-8</div>
<div class="t" style="left:1675px;top:991px;color:#9da0a8">4 spaces</div>
<div class="t" style="left:1765px;top:991px;color:#9da0a8">Python 3.13</div>
<svg style="left:1881px;top:991px" width="20" height="19" viewBox="0 0 20 19"><g fill="none" stroke="#9da0a8" stroke-width="1.5" stroke-linejoin="round"><rect x="1.5" y="8.5" width="11" height="9" rx="1.5"/><path d="M9.5 8.5V5.2A3.7 3.7 0 0 1 17 5.2V7"/></g><circle cx="7" cy="13" r="1" fill="#9da0a8"/></svg>

<!-- taskbar -->
<div id="taskbar" class="a" style="left:0;top:1020px;width:1920px;height:60px;background:#1c1c1c"></div>

<!-- taskbar content -->
<div class="a" style="left:0;top:1020px;width:1920px;height:1px;background:#404044"></div>
<div class="a" style="left:520px;top:1021px;width:900px;height:59px;background:linear-gradient(90deg,rgba(28,28,36,0),rgba(28,28,38,0.9) 20%,rgba(28,28,38,0.9) 80%,rgba(28,28,36,0))"></div>
<!-- weather -->
<svg style="left:24px;top:1034px" width="28" height="30" viewBox="0 0 28 30">
<path d="M2 6 H12 V8 L11.2 12 L10.4 8.5 L9.4 11.5 L8.6 8.5 L7.6 12.5 L6.6 8.5 L5.6 11 L4.8 8.5 L3.8 11.5 L3 8.5 L2 10 Z" fill="#9fd8f5"/>
<rect x="15.5" y="1" width="9" height="21" rx="4.5" fill="#e3eef5"/>
<circle cx="20" cy="23.5" r="6" fill="#e3eef5"/>
<rect x="18.3" y="3" width="3.4" height="18" rx="1.7" fill="#b9c9d4"/>
<rect x="18.3" y="10" width="3.4" height="12" fill="#1e90e6"/>
<circle cx="20" cy="23.5" r="4.2" fill="#1e90e6"/>
<circle cx="21" cy="24.5" r="1.5" fill="#7cc3f7"/>
</svg>
<div class="a" style="left:64px;top:1029px;font-size:15.4px;line-height:20px;color:#ffffff;white-space:pre">Холодно</div>
<div class="a" style="left:64px;top:1049px;font-size:14.6px;line-height:20px;color:#cfcfcf;white-space:pre">Сейчас</div>
<!-- start -->
<svg style="left:585px;top:1036px" width="29" height="29" viewBox="0 0 29 29"><defs><linearGradient id="wg" x1="0" y1="0" x2="1" y2="1"><stop offset="0" stop-color="#6fd3ff"/><stop offset="1" stop-color="#1a9cf0"/></linearGradient></defs><g fill="url(#wg)"><rect x="0" y="0" width="13.8" height="13.8" rx="1.2"/><rect x="15.2" y="0" width="13.8" height="13.8" rx="1.2"/><rect x="0" y="15.2" width="13.8" height="13.8" rx="1.2"/><rect x="15.2" y="15.2" width="13.8" height="13.8" rx="1.2"/></g></svg>
<!-- search pill -->
<div class="a" style="left:631px;top:1030px;width:275px;height:40px;border-radius:20px;background:#38383c;border:1px solid #46464a"></div>
<svg style="left:645px;top:1040px" width="21" height="21" viewBox="0 0 21 21"><g fill="none" stroke="#e0e0e0" stroke-width="2"><circle cx="8.5" cy="8.5" r="6.8"/><path d="M13.5 13.5L19 19"/></g></svg>
<div class="a" style="left:677px;top:1040px;font-size:18px;line-height:20px;color:#cfcfcf;white-space:pre">Поиск</div>
<svg style="left:838px;top:1034px" width="60" height="34" viewBox="0 0 60 34">
<path d="M4 24 C2 18 8 12 14 14 C16 6 26 4 32 9 C38 3 50 6 50 14 C56 14 58 20 56 24 Z" fill="#7fb7e6"/>
<rect x="8" y="16" width="9" height="10" fill="#e07a6a"/><rect x="17" y="13" width="8" height="13" fill="#f2c38a"/>
<rect x="25" y="6" width="6" height="20" fill="#d9655a"/><rect x="31" y="12" width="9" height="14" fill="#5fb59f"/>
<rect x="40" y="15" width="8" height="11" fill="#e58aa0"/><rect x="48" y="18" width="6" height="8" fill="#f0a060"/>
<path d="M2 26 H58 Q55 32 30 32 Q5 32 2 26 Z" fill="#39c2d8"/>
</svg>
<!-- task view -->
<svg style="left:920px;top:1035px" width="32" height="30" viewBox="0 0 32 30"><rect x="0.5" y="8" width="22" height="21" rx="2" fill="#5a5a5e"/><rect x="9" y="0.5" width="22" height="21" rx="2" fill="#f2f2f2"/><rect x="9" y="8" width="13.5" height="13.5" fill="#a9a9ad"/></svg>
<!-- explorer -->
<svg style="left:975px;top:1036px" width="32" height="29" viewBox="0 0 32 29"><path d="M0.5 3 A2 2 0 0 1 2.5 1 H11 L14 4 H29.5 A2 2 0 0 1 31.5 6 V27 A2 2 0 0 1 29.5 29 H2.5 A2 2 0 0 1 0.5 27 Z" fill="#e9a825"/><rect x="0.5" y="7" width="31" height="22" rx="2" fill="#ffd34e"/><rect x="8" y="19" width="16" height="10" rx="2" fill="#1f7fd8"/><rect x="11" y="21.5" width="10" height="1.6" fill="#9fd0ff"/></svg>
<!-- edge -->
<svg style="left:1030px;top:1034px" width="32" height="32" viewBox="0 0 32 32"><defs><linearGradient id="eg1" x1="0" y1="0" x2="1" y2="1"><stop offset="0" stop-color="#36c0f0"/><stop offset="0.6" stop-color="#1a82d8"/><stop offset="1" stop-color="#0e5bb0"/></linearGradient><linearGradient id="eg2" x1="0" y1="0" x2="1" y2="0"><stop offset="0" stop-color="#1fb0e8"/><stop offset="1" stop-color="#55d26a"/></linearGradient></defs><circle cx="16" cy="16" r="15.5" fill="url(#eg1)"/><path d="M4 13 C6 4 14 1 20 2 C27 3 32 9 31.5 16 C31 20 28 22 24 22 C19 22 15 20 16 16 C17 13 21 12 21 12 C17 8 9 8 4 13 Z" fill="url(#eg2)"/><path d="M10 22 C10 16 14 13 18 13 C14 14 13 19 16 22 C19 25 25 25 28 22 C25 28 19 31 14 30 C11 28 10 25 10 22 Z" fill="#0b4ea0"/></svg>
<!-- steam -->
<svg style="left:1086px;top:1035px" width="30" height="30" viewBox="0 0 30 30"><defs><linearGradient id="sg" x1="0" y1="0" x2="0" y2="1"><stop offset="0" stop-color="#10264a"/><stop offset="1" stop-color="#1060b8"/></linearGradient></defs><circle cx="15" cy="15" r="14.5" fill="url(#sg)"/><circle cx="19.5" cy="11" r="5" fill="none" stroke="#e8eef5" stroke-width="2"/><path d="M0.8 17 L9 20.5" stroke="#e8eef5" stroke-width="3.5"/><circle cx="9.5" cy="20.8" r="3.3" fill="none" stroke="#e8eef5" stroke-width="2"/><path d="M12 18.5 L16.5 14" stroke="#e8eef5" stroke-width="2.5"/></svg>
<!-- telegram -->
<svg style="left:1141px;top:1037px" width="40" height="30" viewBox="0 0 40 30"><circle cx="14.5" cy="15.5" r="14" fill="#2aa3e0"/><path d="M6.5 15 L22 8.5 L19.5 22 L14.5 18.5 L12 21 L11.8 17 L19 11 L10.5 16.5 Z" fill="#ffffff"/><circle cx="28" cy="9" r="7.5" fill="#8f8f93" stroke="#1c1c24" stroke-width="1"/><text x="28" y="12.6" text-anchor="middle" font-family="Liberation Sans" font-size="10.5" fill="#f4f4f4">77</text></svg>
<!-- terminal -->
<svg style="left:1196px;top:1038px" width="31" height="25" viewBox="0 0 31 25"><rect x="0.5" y="0.5" width="30" height="24" rx="2" fill="#3c3c3e"/><rect x="0.5" y="0.5" width="30" height="4" fill="#8a8a8c"/><rect x="10" y="0.5" width="8" height="4" fill="#b5b5b7"/><path d="M4 10 L9 13.5 L4 17" fill="none" stroke="#c8c8c8" stroke-width="2.2"/><rect x="13" y="17" width="10" height="2.5" fill="#e8e8e8"/></svg>
<!-- pycharm active -->
<div class="a" style="left:1241px;top:1025px;width:50px;height:50px;border-radius:5px;background:#2a2a32;border:1px solid #34343c"></div>
<svg style="left:1251px;top:1034px" width="31" height="31" viewBox="0 0 20 20">
<defs><linearGradient id="pcg2" x1="0" y1="1" x2="1" y2="0"><stop offset="0" stop-color="#07c3f2"/><stop offset="0.45" stop-color="#07c3f2"/><stop offset="0.75" stop-color="#75e07a"/><stop offset="1" stop-color="#fcf84a"/></linearGradient></defs>
<path d="M7 0 H20 V12.5 L12.5 20 H0 V7 Z" fill="url(#pcg2)"/>
<rect x="4.2" y="4.2" width="11.6" height="11.6" fill="#000"/>
<text x="5" y="10.6" font-family="Liberation Sans" font-size="6.8" fill="#f2f2f2" font-weight="bold" letter-spacing="-0.5">PC</text>
<rect x="5.2" y="13.6" width="4.6" height="1.1" fill="#e0e0e0"/>
</svg>
<div class="a" style="left:1256px;top:1070px;width:20px;height:3px;border-radius:1.5px;background:#f0826e"></div>
<!-- db -->
<svg style="left:1309px;top:1036px" width="24" height="28" viewBox="0 0 24 28"><defs><linearGradient id="dbg" x1="0" y1="0" x2="1" y2="0"><stop offset="0" stop-color="#9a9ca2"/><stop offset="0.5" stop-color="#d9dade"/><stop offset="1" stop-color="#8c8e94"/></linearGradient></defs><path d="M1 4 A11 3.5 0 0 1 23 4 V24 A11 3.5 0 0 1 1 24 Z" fill="url(#dbg)"/><ellipse cx="12" cy="4" rx="11" ry="3.5" fill="#e6e7ea"/><path d="M3 20 C8 14 14 10 21 7 M6 22 C10 16 15 12 22 10" fill="none" stroke="#6d6f75" stroke-width="1"/></svg>
<!-- indicator dots -->
<div class="a" style="left:987px;top:1071px;width:8px;height:3px;border-radius:1.5px;background:#9a9a9e"></div>
<div class="a" style="left:1042px;top:1071px;width:8px;height:3px;border-radius:1.5px;background:#9a9a9e"></div>
<div class="a" style="left:1097px;top:1071px;width:8px;height:3px;border-radius:1.5px;background:#9a9a9e"></div>
<div class="a" style="left:1152px;top:1071px;width:8px;height:3px;border-radius:1.5px;background:#9a9a9e"></div>
<div class="a" style="left:1207px;top:1071px;width:8px;height:3px;border-radius:1.5px;background:#9a9a9e"></div>
<div class="a" style="left:1317px;top:1071px;width:8px;height:3px;border-radius:1.5px;background:#9a9a9e"></div>
<!-- tray -->
<svg style="left:1561px;top:1045px" width="16" height="10" viewBox="0 0 16 10"><path d="M1.5 8.5L8 2L14.5 8.5" fill="none" stroke="#e8e8e8" stroke-width="1.8"/></svg>
<svg style="left:1597px;top:1042px" width="23" height="15" viewBox="0 0 23 15"><path d="M5 14.5 A4.5 4.5 0 0 1 4.5 5.6 A6 6 0 0 1 15.5 4.5 A5 5 0 0 1 18.5 14.5 Z" fill="#c9c9cc"/><path d="M8 7 A5 5 0 0 1 15.5 4.5 A5 5 0 0 1 18.5 14.5 H10 Z" fill="#e2e2e5"/></svg>
<div class="a" style="left:1643px;top:1041px;font-size:14px;line-height:20px;color:#f0f0f0;white-space:pre">ENG</div>
<svg style="left:1693px;top:1041px" width="22" height="17" viewBox="0 0 22 17"><g fill="none" stroke="#f0f0f0" stroke-width="1.7" stroke-linecap="round"><path d="M1.5 5.5 A13 13 0 0 1 20.5 5.5"/><path d="M4.5 8.8 A8.5 8.5 0 0 1 17.5 8.8"/><path d="M7.5 12 A4.2 4.2 0 0 1 14.5 12"/></g><circle cx="11" cy="15" r="1.4" fill="#f0f0f0"/></svg>
<svg style="left:1723px;top:1041px" width="23" height="17" viewBox="0 0 23 17"><path d="M1.5 6 H5 L10 1.8 V15.2 L5 11 H1.5 Z" fill="none" stroke="#f0f0f0" stroke-width="1.5" stroke-linejoin="round"/><path d="M13 5.5 A4 4 0 0 1 13 11.5" fill="none" stroke="#f0f0f0" stroke-width="1.5"/><path d="M16 3 A8 8 0 0 1 16 14" fill="none" stroke="#8a8a8a" stroke-width="1.3"/><path d="M19 1 A11 11 0 0 1 19 16" fill="none" stroke="#6a6a6a" stroke-width="1.2"/></svg>
<svg style="left:1753px;top:1039px" width="22" height="18" viewBox="0 0 22 18"><rect x="1" y="5" width="17" height="11" rx="2" fill="none" stroke="#f0f0f0" stroke-width="1.6"/><rect x="18.5" y="8" width="2.5" height="5" fill="#f0f0f0"/><rect x="3" y="7" width="13" height="7" fill="#f0f0f0"/><path d="M6 0.5 L3.5 5 H6.5 L4.5 9" fill="none" stroke="#f0f0f0" stroke-width="1.4"/></svg>
<div class="a" style="left:1765px;top:1030px;width:101px;text-align:right;font-size:15px;line-height:20px;color:#f0f0f0;white-space:pre">16:44</div>
<div class="a" style="left:1765px;top:1050px;width:101px;text-align:right;font-size:15px;line-height:20px;color:#f0f0f0;white-space:pre">25.01.2025</div>
<svg style="left:1876px;top:1041px" width="18" height="20" viewBox="0 0 18 20"><path d="M3 8 A6 6 0 0 1 15 8 V12.5 L17.5 15.5 H0.5 L3 12.5 Z" fill="#f4a582"/><path d="M6.5 17 H11.5 A2.5 2.5 0 0 1 6.5 17 Z" fill="#f4a582"/></svg>
</body></html>
